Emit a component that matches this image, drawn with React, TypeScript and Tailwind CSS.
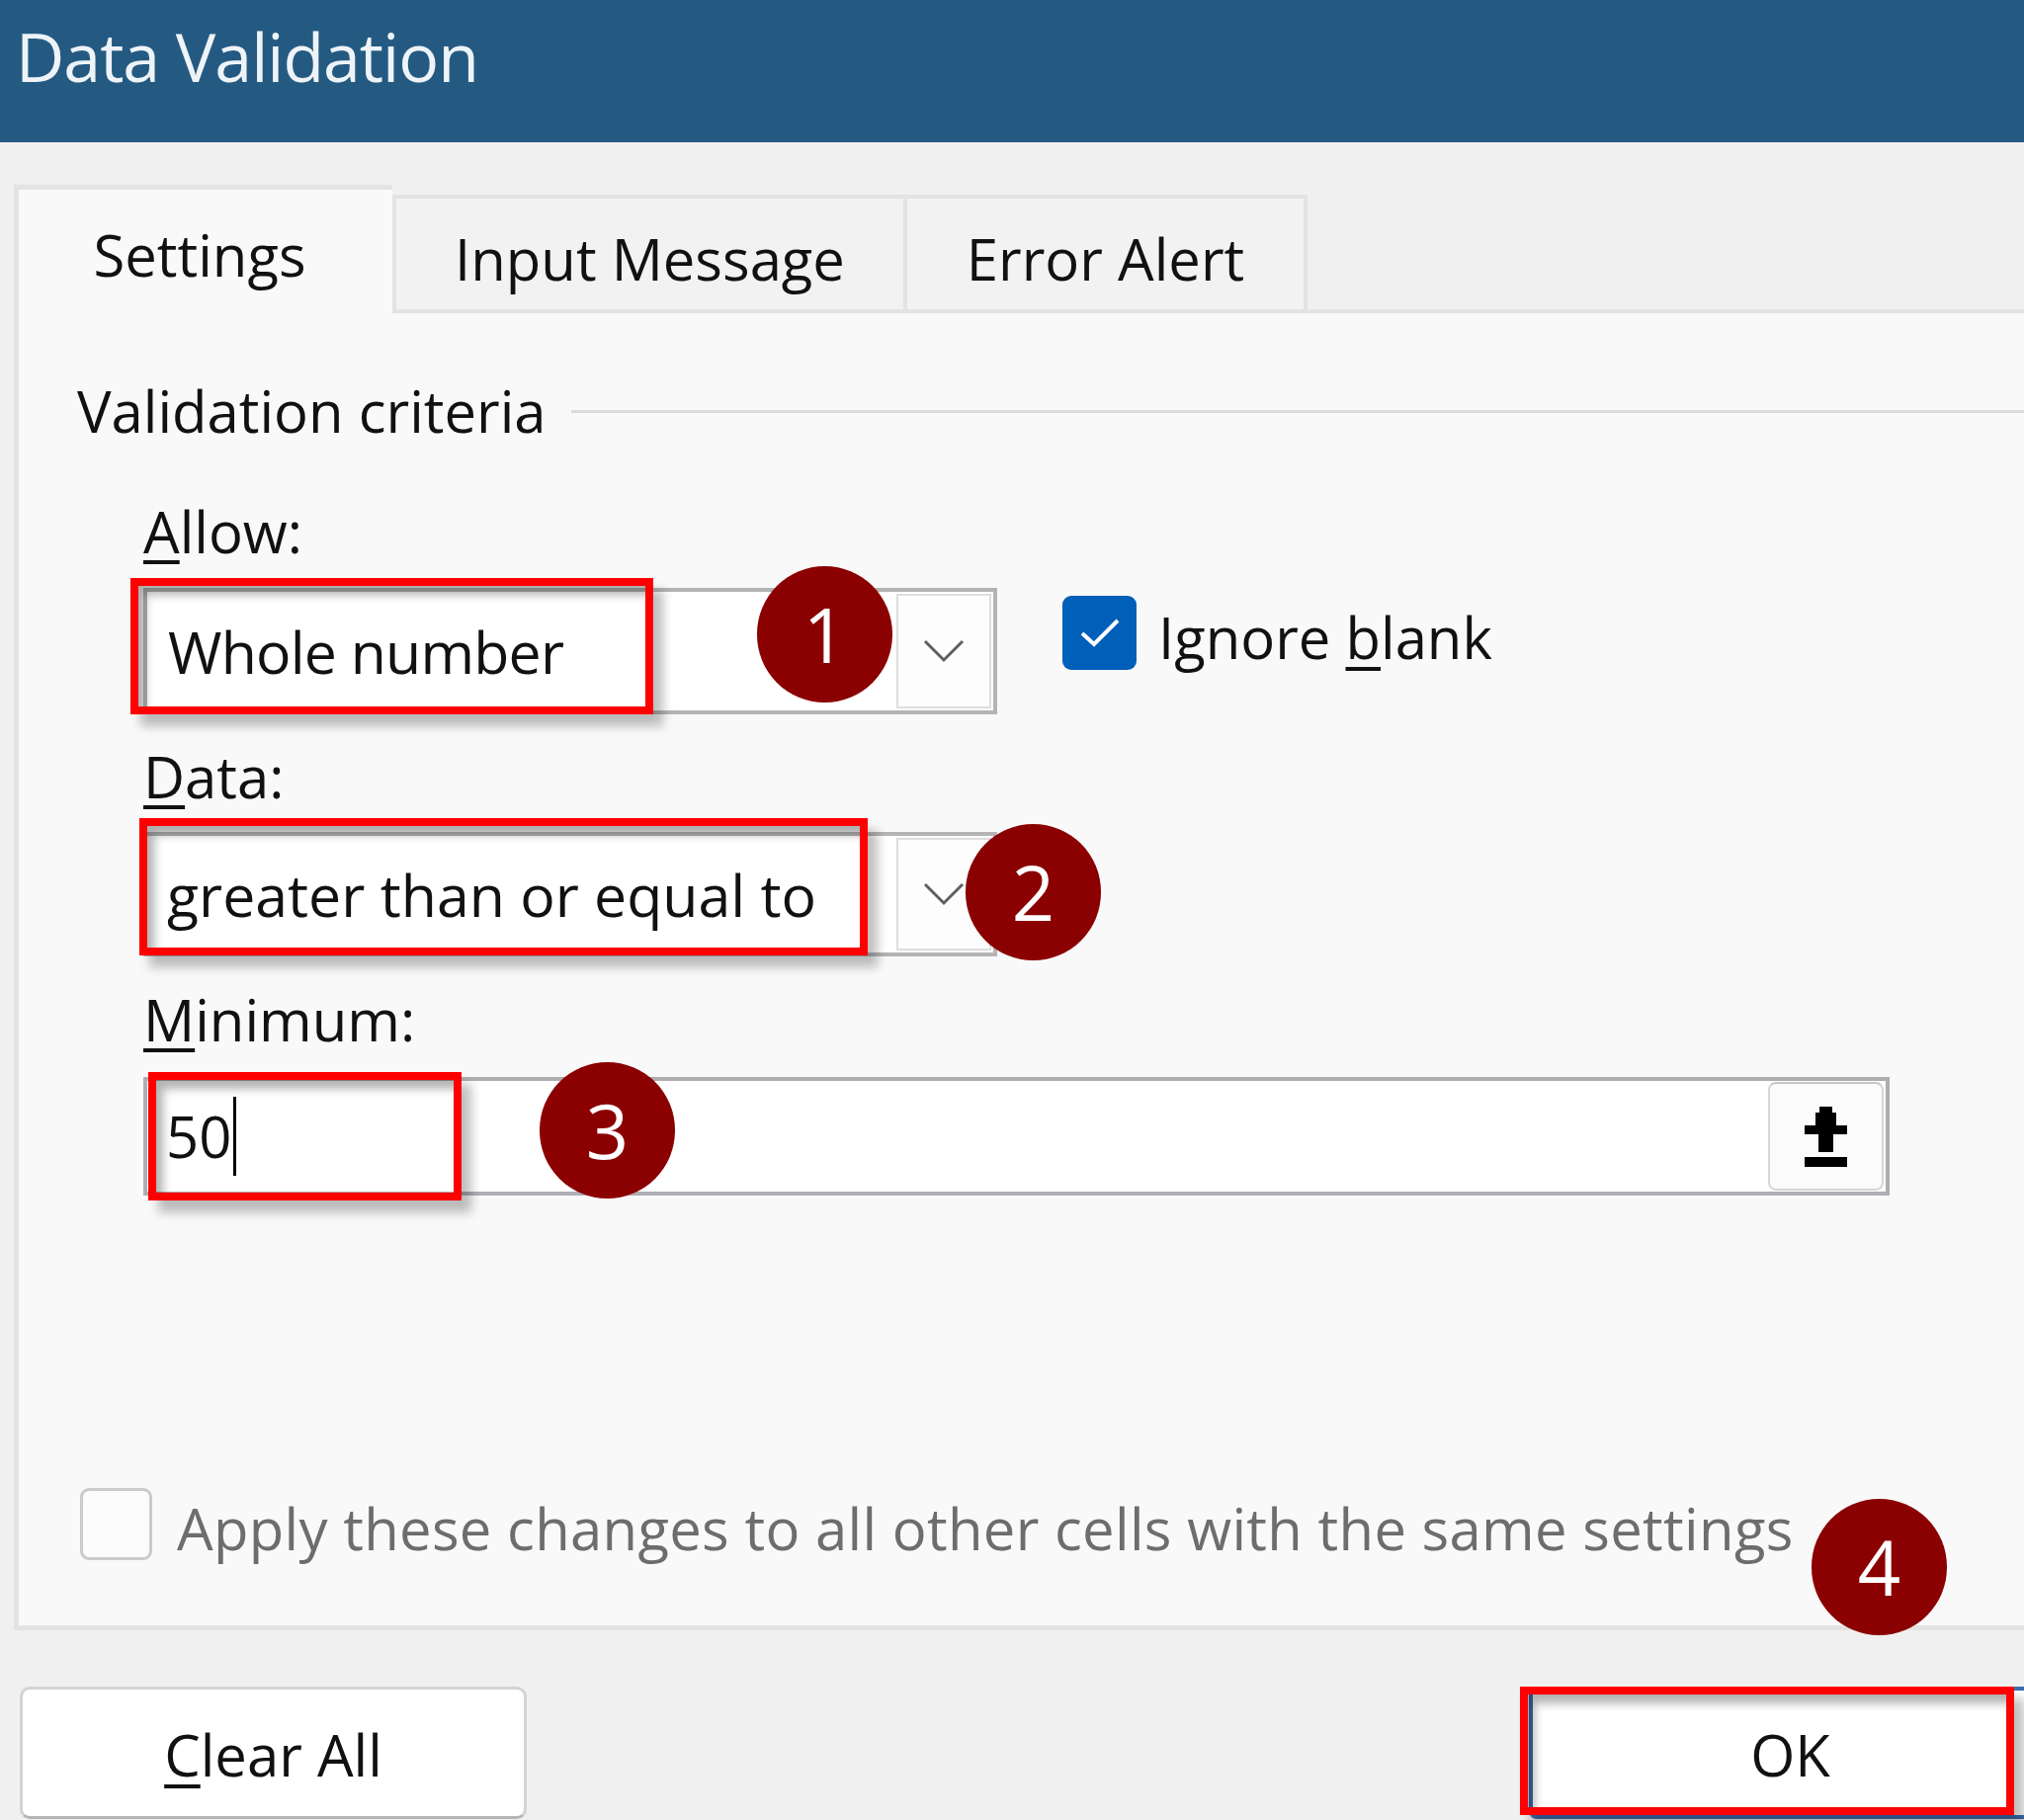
import React from "react";

function Chevron() {
  return (
    <svg width="42" height="24" viewBox="0 0 42 24">
      <polyline points="2,2 21,21 40,2" fill="none" stroke="#606060" strokeWidth="3" />
    </svg>
  );
}

function RedBox({ cls }: { cls: string }) {
  return (
    <div
      className={
        "absolute border-[8px] border-[#ff0000] shadow-[10px_12px_10px_rgba(0,0,0,0.25),inset_7px_9px_10px_rgba(0,0,0,0.3)] " +
        cls
      }
    />
  );
}

function Badge({ n, cls }: { n: string; cls: string }) {
  return (
    <div
      className={
        "absolute w-[137px] h-[138px] rounded-full bg-[#8b0000] flex items-center justify-center text-white text-[76px] leading-none " +
        cls
      }
    >
      {n}
    </div>
  );
}

export default function App() {
  return (
    <div className="relative w-[2048px] h-[1842px] overflow-hidden bg-[#f0f0f0] font-['Open_Sans',sans-serif] text-[#111]">
      {/* Title bar */}
      <div className="h-[144px] bg-[#245a82] pl-[16px] pt-[23px]">
        <div className="text-[68px] leading-none tracking-[-1px] text-[#eef3f7]">Data Validation</div>
      </div>

      {/* Tabs */}
      <div className="ml-[14px] mt-[43px] flex items-end h-[130px]">
        <div className="h-[130px] w-[383px] shrink-0 bg-[#f9f9f9] border-t-[5px] border-l-[5px] border-[#e3e3e3] flex justify-center pt-[37px] pr-[12px]">
          <span className="text-[58px] leading-none">Settings</span>
        </div>
        <div className="h-[120px] w-[521px] shrink-0 bg-[#f2f2f2] border-[4px] border-[#e3e3e3] flex justify-center pt-[32px]">
          <span className="text-[58px] leading-none">Input Message</span>
        </div>
        <div className="h-[120px] w-[405px] shrink-0 bg-[#f2f2f2] border-y-[4px] border-r-[4px] border-[#e3e3e3] flex justify-center pt-[32px]">
          <span className="text-[58px] leading-none">Error Alert</span>
        </div>
        <div className="flex-1 h-[4px] bg-[#e3e3e3]" />
      </div>

      {/* Panel */}
      <div className="ml-[14px] h-[1333px] bg-[#f9f9f9] border-l-[5px] border-b-[5px] border-[#e3e3e3] flex flex-col">
        <div className="mt-[70px] ml-[59px] flex items-center">
          <span className="text-[58px] leading-none">Validation criteria</span>
          <div className="ml-[25px] flex-1 h-[3px] bg-[#dcdcdc]" />
        </div>

        <div className="mt-[64px] ml-[126px] text-[58px] leading-none">
          <span className="underline decoration-[4px] underline-offset-[7px]">A</span>llow:
        </div>

        <div className="mt-[28px] ml-[126px] flex items-start">
          <div className="w-[864px] h-[128px] shrink-0 border-[4px] border-[#b4b4b4] bg-white flex items-center">
            <span className="flex-1 pl-[21px] text-[59px] leading-none tracking-[-0.8px]">Whole number</span>
            <div className="h-[116px] w-[96px] mr-[2px] border-[2px] border-[#dedede] bg-[#fdfdfd] flex items-center justify-center">
              <Chevron />
            </div>
          </div>
          <div className="ml-[66px] mt-[8px] w-[75px] h-[75px] shrink-0 rounded-[9px] bg-[#005fb8] flex items-center justify-center">
            <svg width="75" height="75" viewBox="0 0 75 75">
              <polyline points="20,38 32,49 56,25" fill="none" stroke="#ffffff" strokeWidth="4" />
            </svg>
          </div>
          <div className="ml-[22px] mt-[21px] text-[58px] leading-none">
            Ignore <span className="underline decoration-[4px] underline-offset-[8px]">b</span>lank
          </div>
        </div>

        <div className="mt-[34px] ml-[126px] text-[58px] leading-none">
          <span className="underline decoration-[4px] underline-offset-[7px]">D</span>ata:
        </div>

        <div className="mt-[27px] ml-[126px] flex items-start">
          <div className="w-[864px] h-[126px] shrink-0 border-[4px] border-[#b4b4b4] bg-white flex items-center">
            <span className="flex-1 pl-[20px] text-[59px] leading-none">greater than or equal to</span>
            <div className="h-[114px] w-[96px] mr-[2px] border-[2px] border-[#dedede] bg-[#fdfdfd] flex items-center justify-center">
              <Chevron />
            </div>
          </div>
        </div>

        <div className="mt-[35px] ml-[126px] text-[58px] leading-none">
          <span className="underline decoration-[4px] underline-offset-[7px]">M</span>inimum:
        </div>

        <div className="mt-[29px] ml-[126px] w-[1767px] h-[120px] border-[4px] border-[#aeaeb3] bg-white flex items-center">
          <span className="pl-[19px] text-[58px] leading-none">50</span>
          <span className="ml-[2px] w-[3px] h-[80px] bg-black" />
          <div className="ml-auto mr-[2px] w-[117px] h-[110px] rounded-[8px] border-[2px] border-[#d6d6d6] border-t-[#c6c6c6] bg-[#fbfbfb] flex items-center justify-center">
            <svg width="43" height="61" viewBox="0 0 43 61">
              <polygon
                points="15,0 28,0 28,6 32,6 32,19 43,19 43,28 29,28 29,46 14,46 14,28 0,28 0,19 11,19 11,6 15,6"
                fill="#000"
              />
              <rect x="0" y="51" width="43" height="10" fill="#000" />
            </svg>
          </div>
        </div>

        <div className="mt-[296px] ml-[62px] flex items-start">
          <div className="w-[73px] h-[73px] shrink-0 rounded-[9px] border-[3px] border-[#cbcbcb] bg-[#fbfbfb]" />
          <div className="ml-[25px] mt-[12px] text-[58px] leading-none tracking-[0.3px] text-[#6d6d6d] whitespace-nowrap">
            Apply these changes to all other cells with the same settings
          </div>
        </div>
      </div>

      {/* Buttons */}
      <div className="mt-[57px] flex">
        <div className="ml-[20px] w-[513px] h-[134px] shrink-0 bg-white border-[3px] border-[#d3d3d3] border-b-[#b5b5b5] rounded-[10px] flex items-center justify-center pt-[4px]">
          <span className="text-[58px] leading-none">
            <span className="underline decoration-[4px] underline-offset-[8px]">C</span>lear All
          </span>
        </div>
        <div className="ml-[1014px] w-[529px] h-[134px] shrink-0 bg-white border-[4px] border-[#3b6db0] rounded-[8px] flex items-center justify-center pt-[4px]">
          <span className="text-[58px] leading-none">OK</span>
        </div>
      </div>

      {/* Annotations */}
      <RedBox cls="left-[132px] top-[585px] w-[529px] h-[138px]" />
      <RedBox cls="left-[141px] top-[828px] w-[737px] h-[139px]" />
      <RedBox cls="left-[150px] top-[1085px] w-[317px] h-[130px]" />
      <RedBox cls="left-[1538px] top-[1707px] w-[500px] h-[130px]" />

      <Badge n="1" cls="left-[766px] top-[573px]" />
      <Badge n="2" cls="left-[977px] top-[834px]" />
      <Badge n="3" cls="left-[546px] top-[1075px]" />
      <Badge n="4" cls="left-[1833px] top-[1517px]" />
    </div>
  );
}
